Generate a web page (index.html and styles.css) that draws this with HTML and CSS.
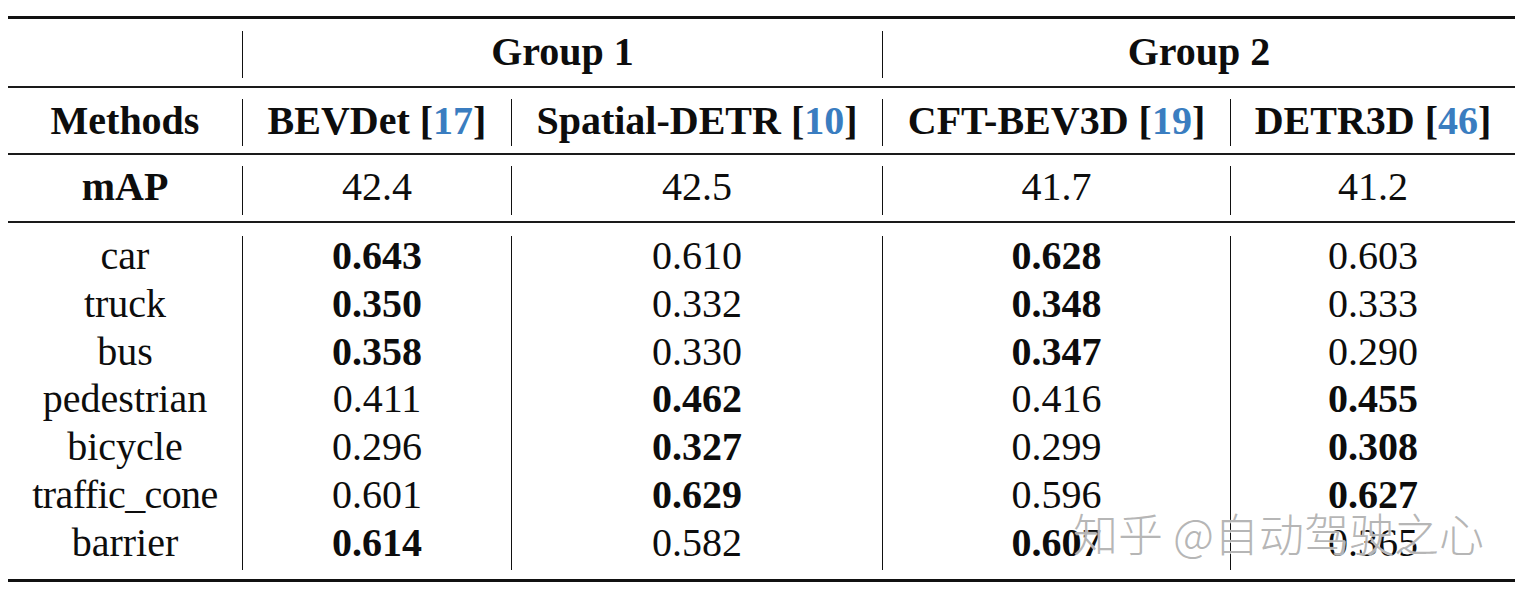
FILE: index.html
```html
<!DOCTYPE html>
<html lang="en">
<head>
<meta charset="utf-8">
<title>Per-class AP comparison</title>
<link rel="stylesheet" href="styles.css">
</head>
<body>
<div class="page">
  <div class="table">
    <div class="rule thick"></div>
    <div class="row group-row">
      <div class="cell"></div>
      <div class="cell sep bold">Group 1</div>
      <div class="cell sep bold">Group 2</div>
    </div>
    <div class="rule"></div>
    <div class="row cols head-row">
      <div class="cell bold">Methods</div>
      <div class="cell sep bold">BEVDet [<span class="cite">17</span>]</div>
      <div class="cell sep bold">Spatial-DETR [<span class="cite">10</span>]</div>
      <div class="cell sep bold">CFT-BEV3D [<span class="cite">19</span>]</div>
      <div class="cell sep bold">DETR3D [<span class="cite">46</span>]</div>
    </div>
    <div class="rule"></div>
    <div class="row cols map-row">
      <div class="cell bold">mAP</div>
      <div class="cell sep">42.4</div>
      <div class="cell sep">42.5</div>
      <div class="cell sep">41.7</div>
      <div class="cell sep">41.2</div>
    </div>
    <div class="rule"></div>
    <div class="body cols">
      <div class="col">
        <div class="val">car</div>
        <div class="val">truck</div>
        <div class="val">bus</div>
        <div class="val">pedestrian</div>
        <div class="val">bicycle</div>
        <div class="val narrow">traffic_cone</div>
        <div class="val">barrier</div>
      </div>
      <div class="col sep">
        <div class="val bold">0.643</div>
        <div class="val bold">0.350</div>
        <div class="val bold">0.358</div>
        <div class="val">0.411</div>
        <div class="val">0.296</div>
        <div class="val">0.601</div>
        <div class="val bold">0.614</div>
      </div>
      <div class="col sep">
        <div class="val">0.610</div>
        <div class="val">0.332</div>
        <div class="val">0.330</div>
        <div class="val bold">0.462</div>
        <div class="val bold">0.327</div>
        <div class="val bold">0.629</div>
        <div class="val">0.582</div>
      </div>
      <div class="col sep">
        <div class="val bold">0.628</div>
        <div class="val bold">0.348</div>
        <div class="val bold">0.347</div>
        <div class="val">0.416</div>
        <div class="val">0.299</div>
        <div class="val">0.596</div>
        <div class="val bold">0.607</div>
      </div>
      <div class="col sep">
        <div class="val">0.603</div>
        <div class="val">0.333</div>
        <div class="val">0.290</div>
        <div class="val bold">0.455</div>
        <div class="val bold">0.308</div>
        <div class="val bold">0.627</div>
        <div class="val">0.365</div>
      </div>
    </div>
    <div class="rule thick"></div>
  </div>
  <div class="watermark">知乎 @自动驾驶之心</div>
</div>
</body>
</html>
```

FILE: styles.css
```css
html, body {
  margin: 0;
  padding: 0;
  background: #ffffff;
}

.page {
  position: relative;
  width: 1527px;
  height: 594px;
  overflow: hidden;
  padding: 16px 0 0 8px;
  box-sizing: border-box;
  font-family: "Liberation Serif", "Times New Roman", serif;
  font-size: 40px;
  color: #0d0d0d;
}

.table {
  width: 1507px;
}

.rule {
  height: 2px;
  background: #1a1a1a;
}

.rule.thick {
  height: 3px;
  background: #111;
}

.row {
  display: grid;
}

.group-row {
  grid-template-columns: 234px 640px 633px;
  padding: 12px 0 8px;
}

.cols {
  display: grid;
  grid-template-columns: 234px 269px 371px 348px 285px;
}

.cell {
  text-align: center;
  white-space: nowrap;
}

.sep {
  border-left: 1px solid #111;
}

.group-row .cell {
  height: 47px;
  line-height: 41px;
}

.head-row {
  padding: 11px 0 7px;
}

.head-row .cell {
  height: 47px;
  line-height: 43px;
}

.map-row {
  padding: 11px 0 6px;
}

.map-row .cell {
  height: 49px;
  line-height: 42px;
}

.bold {
  font-weight: bold;
}

.cite {
  color: #3a7dc0;
}

.body {
  padding: 13px 0 9px;
}

.col {
  display: flex;
  flex-direction: column;
  height: 334px;
}

.val {
  height: 47.8px;
  line-height: 47.8px;
  text-align: center;
  white-space: nowrap;
}

.val:first-child {
  margin-top: -4px;
}

.narrow {
  letter-spacing: -0.6px;
}

.watermark {
  position: absolute;
  left: 1073px;
  top: 505px;
  font-family: "Noto Sans CJK SC", "Noto Sans", sans-serif;
  font-size: 45px;
  font-weight: 300;
  line-height: 56px;
  color: rgba(150, 150, 150, 0.7);
  text-shadow: 0 0 1px #fff, 1px 1px 0 rgba(255, 255, 255, 0.6);
  white-space: nowrap;
}
```
